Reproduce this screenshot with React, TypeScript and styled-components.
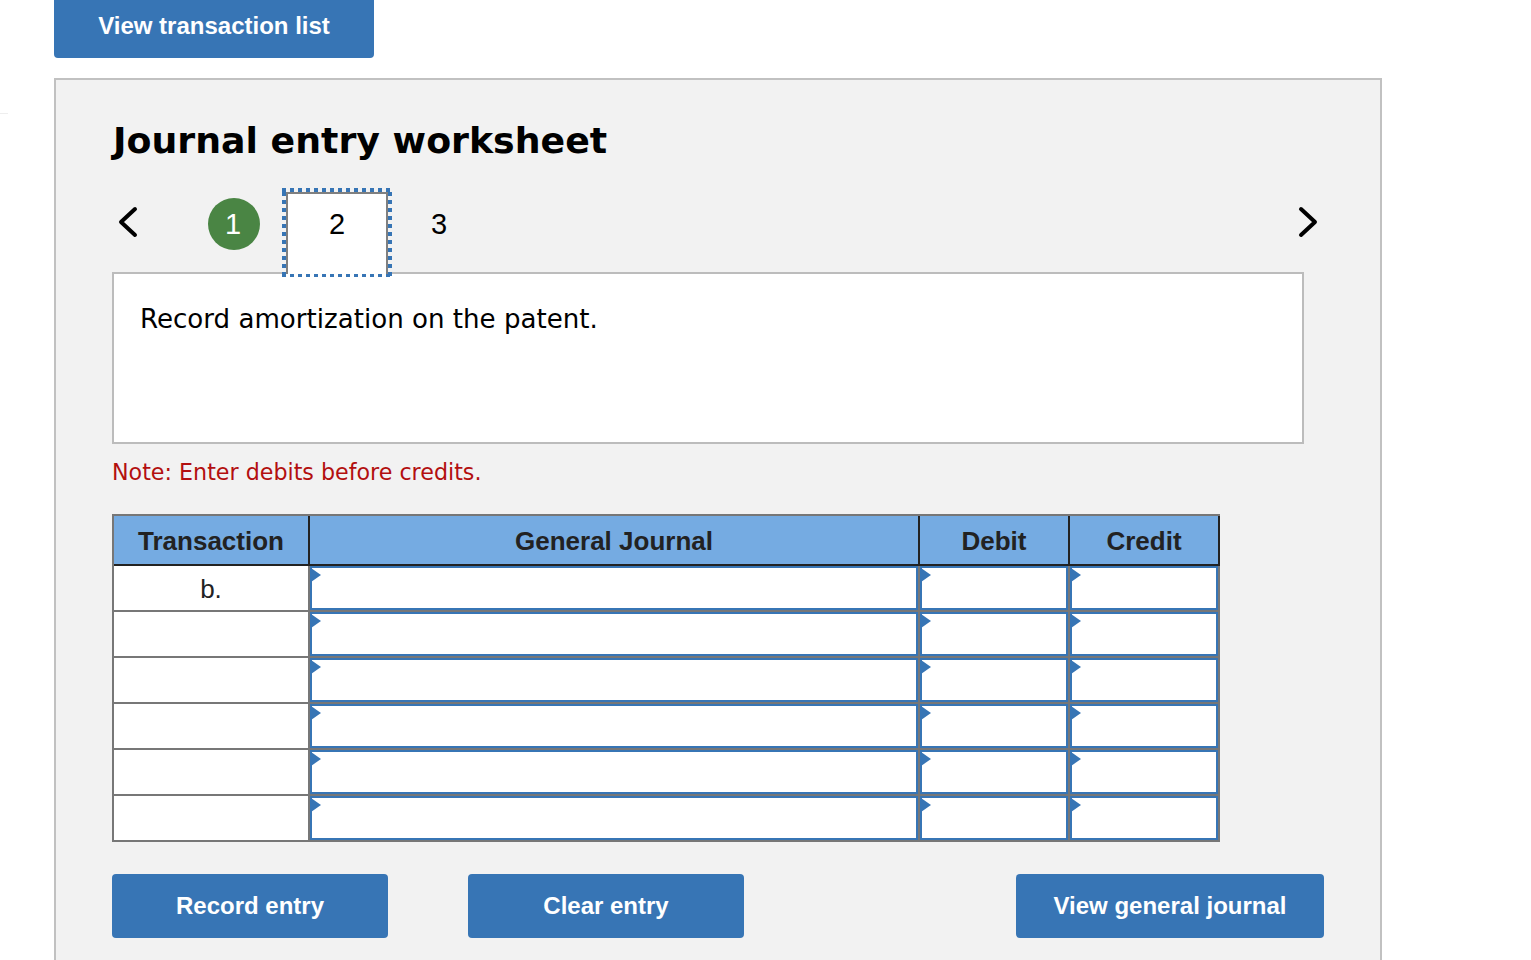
import React from "react";
import styled, { createGlobalStyle } from "styled-components";

const Global = createGlobalStyle`
  html, body { margin: 0; padding: 0; height: 960px; overflow: hidden; background: #fff; }
  * { box-sizing: border-box; }
`;

const Page = styled.div`
  position: relative;
  padding-left: 54px;
  font-family: "Liberation Sans", Arial, sans-serif;
`;

const EdgeMark = styled.div`
  position: absolute;
  left: 0;
  top: 113px;
  width: 8px;
  height: 1px;
  background: #eeeeee;
`;

const ActionButton = styled.button<{ $width: number }>`
  display: block;
  width: ${(p) => p.$width}px;
  height: 64px;
  padding: 0;
  border: 0;
  border-radius: 4px;
  background: #3775b5;
  color: #fff;
  font: bold 24px/1 "Liberation Sans", Arial, sans-serif;
  text-align: center;
`;

const TopButton = styled(ActionButton)`
  height: 58px;
  border-radius: 0 0 4px 4px;
  padding-bottom: 6px;
`;

const Panel = styled.section`
  width: 1328px;
  height: 960px;
  margin-top: 20px;
  padding: 40px 56px 0;
  border: 2px solid #c1c1c1;
  background: #f2f2f2;
`;

const Title = styled.h1`
  margin: 0;
  padding-left: 1px;
  font: bold 36.3px/42px "DejaVu Sans", Verdana, sans-serif;
  color: #000;
`;

const Steps = styled.nav`
  position: relative;
  z-index: 1;
  display: flex;
  width: 1212px;
  height: 82px;
  margin-top: 30px;
  margin-bottom: -2px;
`;

const Arrow = styled.div<{ $end?: boolean }>`
  display: flex;
  flex: ${(p) => (p.$end ? "1" : "0 0 72px")};
  justify-content: ${(p) => (p.$end ? "flex-end" : "flex-start")};
  padding: 14px 6px 0;
  svg { display: block; }
`;

const Step = styled.div`
  position: relative;
  display: flex;
  justify-content: center;
  width: 102px;
  height: 82px;
  font-size: 29px;
  line-height: 64px;
  color: #000;
`;

const CurrentStep = styled(Step)`
  background: #fff;
  border: 2px solid #808080;
  border-bottom: 0;
  line-height: 60px;

  &::before {
    content: "";
    position: absolute;
    left: -6px;
    right: -6px;
    top: -6px;
    bottom: -3px;
    background:
      linear-gradient(90deg, #3775b5 50%, transparent 0) 0 0 / 8px 4px repeat-x,
      linear-gradient(90deg, #3775b5 50%, transparent 0) 0 100% / 8px 3px repeat-x,
      linear-gradient(0deg, #3775b5 50%, transparent 0) 0 0 / 4px 8px repeat-y,
      linear-gradient(0deg, #3775b5 50%, transparent 0) 100% 0 / 4px 8px repeat-y;
    pointer-events: none;
  }
`;

const DoneBadge = styled.span`
  display: flex;
  align-items: center;
  justify-content: center;
  width: 52px;
  height: 52px;
  margin: 6px 2px 0 0;
  padding-right: 2px;
  border-radius: 50%;
  background: #4a8544;
  color: #fff;
  line-height: 1;
`;

const Prompt = styled.div`
  width: 1192px;
  height: 172px;
  padding: 29px 26px;
  border: 2px solid #bcbcbc;
  background: #fff;
  font: 26.1px/32px "DejaVu Sans", Verdana, sans-serif;
  color: #000;
`;

const Note = styled.p`
  margin: 14px 0 28px;
  font: 22.2px/28px "DejaVu Sans", Verdana, sans-serif;
  color: #b30f0f;
`;

const Grid = styled.div`
  display: grid;
  grid-template-columns: 196px 610px 150px 150px;
  grid-template-rows: 50px repeat(6, 46px);
  width: 1108px;
  border-top: 2px solid #777;
  border-left: 2px solid #777;
`;

const HeadCell = styled.div`
  display: flex;
  align-items: center;
  justify-content: center;
  padding-top: 2px;
  border-right: 2px solid #222;
  border-bottom: 2px solid #222;
  background: #75abe2;
  color: #222;
  font-size: 26px;
  font-weight: bold;
`;

const Cell = styled.div`
  border-right: 2px solid #777;
  border-bottom: 2px solid #777;
  background: #fff;
  text-align: center;
  color: #222;
  font-size: 26px;
  line-height: 46px;
`;

const EntryCell = styled.div`
  position: relative;
  border: solid #777;
  border-width: 0 2px 2px 0;
  background: #777;

  &::before {
    content: "";
    position: absolute;
    inset: 0;
    border: 2px solid #3775b5;
    background: #fff;
  }
  &::after {
    content: "";
    position: absolute;
    left: 1px;
    top: 2px;
    border-style: solid;
    border-width: 7px 0 7px 10px;
    border-color: transparent transparent transparent #3775b5;
  }
`;

const Actions = styled.div`
  display: flex;
  gap: 80px;
  width: 1212px;
  margin-top: 32px;
`;

const PushedButton = styled(ActionButton)`
  margin-left: auto;
`;

const Chevron = ({ points }: { points: string }) => (
  <svg width="20" height="32" viewBox="0 0 20 32" fill="none" stroke="#000" strokeWidth="4" strokeLinecap="round" strokeLinejoin="round">
    <polyline points={points} />
  </svg>
);

const rows = ["b.", "", "", "", "", ""];

export default function App() {
  return (
    <Page>
      <Global />
      <EdgeMark />
      <TopButton $width={320}>View transaction list</TopButton>
      <Panel>
        <Title>Journal entry worksheet</Title>
        <Steps>
          <Arrow>
            <Chevron points="17,3 3,16 17,29" />
          </Arrow>
          <Step>
            <DoneBadge>1</DoneBadge>
          </Step>
          <CurrentStep>2</CurrentStep>
          <Step>3</Step>
          <Arrow $end>
            <Chevron points="3,3 17,16 3,29" />
          </Arrow>
        </Steps>
        <Prompt>Record amortization on the patent.</Prompt>
        <Note>Note: Enter debits before credits.</Note>
        <Grid>
          <HeadCell>Transaction</HeadCell>
          <HeadCell>General Journal</HeadCell>
          <HeadCell>Debit</HeadCell>
          <HeadCell>Credit</HeadCell>
          {rows.map((label, i) => (
            <React.Fragment key={i}>
              <Cell>{label}</Cell>
              <EntryCell />
              <EntryCell />
              <EntryCell />
            </React.Fragment>
          ))}
        </Grid>
        <Actions>
          <ActionButton $width={276}>Record entry</ActionButton>
          <ActionButton $width={276}>Clear entry</ActionButton>
          <PushedButton $width={308}>View general journal</PushedButton>
        </Actions>
      </Panel>
    </Page>
  );
}
